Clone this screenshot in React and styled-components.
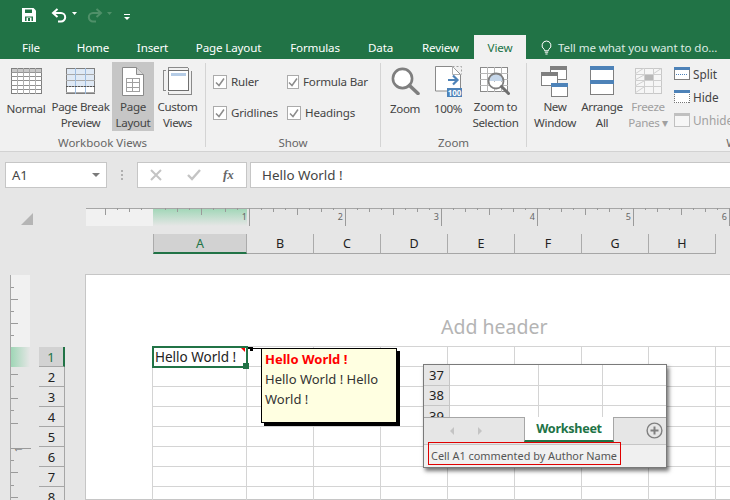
import React from "react";
import styled, { createGlobalStyle } from "styled-components";

const GREEN = "#217346";
const Global = createGlobalStyle`
  html, body { margin: 0; padding: 0; background: #e6e6e6; }
  * { box-sizing: border-box; }
  #root { width: 730px; height: 500px; overflow: hidden; }
`;
const Shell = styled.div`
  width: 730px; height: 500px; overflow: hidden; background: #e6e6e6;
  font-family: "Noto Sans", "Open Sans", sans-serif; color: #444; font-size: 12px;
  display: flex; flex-direction: column;
`;
const TitleBar = styled.header`
  flex: none; height: 59px; background: ${GREEN}; display: flex; flex-direction: column;
`;
const Qat = styled.div`height: 35px; display: flex; align-items: flex-start; padding: 6px 0 0 21px;`;
const QatSlot = styled.span`display: block; margin-right: ${p => p.$gap || 0}px; margin-top: ${p => p.$top || 0}px; line-height: 0;`;
const TabRow = styled.nav`height: 24px; display: flex;`;
const Tab = styled.div`
  flex: none; width: ${p => p.$w}px; display: flex; align-items: center; justify-content: center;
  font-size: 11.6px; letter-spacing: -0.15px; color: ${p => (p.$active ? GREEN : "#fff")};
  background: ${p => (p.$active ? "#f1f1f1" : "transparent")};
`;
const TellMe = styled.div`
  display: flex; align-items: center; gap: 6px; padding-left: 15px; color: #dcebe2; font-size: 11.6px; letter-spacing: -0.1px; white-space: nowrap;
`;
const Ribbon = styled.section`
  flex: none; height: 93px; background: #f1f1f1; border-bottom: 1px solid #d2d2d2; display: flex; padding-top: 4px;
`;
const Group = styled.div`
  flex: none; width: ${p => p.$w}px; height: 84px; display: flex; flex-direction: column;
  border-right: ${p => (p.$last ? "none" : "1px solid #d4d4d4")};
`;
const GroupBody = styled.div`
  flex: 1; display: flex; padding-left: ${p => p.$pad || 0}px; min-height: 0; align-items: flex-start;
`;
const GroupLabel = styled.div`
  flex: none; height: 14px; line-height: 20px; text-align: center; color: #666; font-size: 11.5px; white-space: nowrap;
`;
const BigButton = styled.div`
  flex: none; width: ${p => p.$w}px; height: 69px; margin-left: ${p => p.$ml || 0}px; margin-top: -1px;
  display: flex; flex-direction: column; align-items: center;
  background: ${p => (p.$on ? "#c6c6c6" : "transparent")};
  color: ${p => (p.$dim ? "#a0a0a0" : "#444")};
`;
const BigIcon = styled.div`height: 39px; display: flex; align-items: flex-start; padding-top: ${p => p.$t ?? 6}px; line-height: 0;`;
const BigLabel = styled.div`
  font-size: 11.6px; letter-spacing: -0.35px; line-height: 16px; text-align: center; white-space: pre;
`;
const ShowGrid = styled.div`
  display: grid; grid-template-columns: 74px 74px; grid-auto-rows: 31px; padding-top: 3px;
`;
const CheckRow = styled.label`display: flex; align-items: center; gap: 4px; font-size: 11.6px; letter-spacing: -0.2px; white-space: nowrap; color: #444;`;
const CheckBox = styled.span`
  width: 14px; height: 14px; background: #fff; border: 1px solid #ababab; display: flex; line-height: 0;
  align-items: center; justify-content: center;
`;
const SmallStack = styled.div`margin-left: 4px; margin-top: -1px; display: flex; flex-direction: column;`;
const SmallRow = styled.div`
  height: 23px; display: flex; align-items: center; gap: 3px; font-size: 11.8px; white-space: nowrap;
  color: ${p => (p.$dim ? "#a0a0a0" : "#444")};
`;
const FormulaBar = styled.div`
  flex: none; height: 26px; margin-top: 10px; display: flex; padding-left: 5px;
`;
const NameBox = styled.div`
  flex: none; width: 102px; background: #fff; border: 1px solid #c6c6c6; display: flex; align-items: center; justify-content: space-between;
  padding: 0 6px 0 6px; font-size: 13px; color: #444;
`;
const Caret = styled.span`width: 0; height: 0; border-left: 4px solid transparent; border-right: 4px solid transparent; border-top: 4px solid #7a7a7a;`;
const Grip = styled.div`flex: none; width: 30px; display: flex; flex-direction: column; align-items: center; justify-content: center; gap: 2px;`;
const GripDot = styled.span`width: 2px; height: 2px; background: #b0b0b0;`;
const FnBox = styled.div`
  flex: none; width: 110px; background: #fff; border: 1px solid #c6c6c6; display: flex; align-items: center; padding-left: 12px; line-height: 0;
`;
const FnText = styled.span`
  margin-left: 22px; font-family: "Liberation Serif", serif; font-style: italic; font-weight: bold; font-size: 13px; line-height: 14px; color: #666;
`;
const FnIcon = styled.span`margin-right: ${p => p.$gap}px; line-height: 0;`;
const FormulaInput = styled.div`
  flex: 1; margin-left: 3px; background: #fff; border: 1px solid #c6c6c6; border-right: none; padding-left: 11px; display: flex; align-items: center; font-size: 13.4px; color: #444;
`;
const RulerRow = styled.div`flex: none; height: 18px; margin-top: 20px; display: flex;`;
const Corner = styled.div`
  flex: none; width: 86px; padding: 5px 0 0 21px;
  &::before { content: ""; display: block; width: 12px; height: 12px; background: #b5b5b5; clip-path: polygon(100% 0, 100% 100%, 0 100%); }
`;
const HRuler = styled.div`flex: 1; position: relative; display: flex;`;
const Band = styled.div`
  flex: ${p => (p.$w ? `none` : 1)}; width: ${p => p.$w}px;
  background: ${p => p.$bg};
`;
const RulerMarks = styled.svg`position: absolute; left: 0; top: 0;`;
const ColRow = styled.div`flex: none; height: 20px; margin-top: 8px; display: grid; grid-template-columns: 153px 94px 67px 67px 67px 67px 67px 67px 67px 1fr;`;
const ColCell = styled.div`
  display: flex; align-items: center; justify-content: center; font-size: 12.5px; color: ${p => (p.$on ? GREEN : "#222")};
  background: ${p => (p.$on ? "#d2d2d2" : "transparent")};
  border-bottom: ${p => (p.$on ? `2px solid ${GREEN}` : "1px solid #a6a6a6")};
  border-right: 1px solid #ababab;
  border-left: ${p => (p.$on ? "1px solid #ababab" : "none")};
`;
const ColSpacer = styled.div``;
const SheetRow = styled.div`flex: 1; min-height: 0; margin-top: 20px; display: flex; padding-left: 10px;`;
const VRuler = styled.div`
  flex: none; width: 20px; margin-top: 1px; position: relative; display: flex; flex-direction: column; border-left: 1px solid #a6a6a6;
`;
const VBand = styled.div`
  flex: ${p => (p.$h ? "none" : 1)}; height: ${p => p.$h}px; background: ${p => p.$bg};
`;
const RowHeads = styled.div`flex: none; width: 26px; margin-left: 9px; padding-top: 73px;`;
const RowHead = styled.div`
  height: 20px; display: flex; align-items: center; justify-content: center; font-size: 13px;
  color: ${p => (p.$on ? GREEN : "#222")};
  background: ${p => (p.$on ? "#d2d2d2" : "transparent")};
  border-bottom: 1px solid #a6a6a6;
  border-right: ${p => (p.$on ? `2px solid ${GREEN}` : "1px solid #a6a6a6")};
`;
const Page = styled.main`
  flex: none; width: 646px; margin-left: 20px; background: #fff; border: 1px solid #c6c6c6; border-right: none; position: relative;
`;
const HeaderZone = styled.div`
  height: 72px; padding: 39px 0 0 355px; color: #b4b4b4; font-size: 19.5px; line-height: 26px; white-space: nowrap;
`;
const Grid = styled.div`
  display: grid; grid-template-columns: 94px 67px 67px 67px 67px 67px 67px 67px 1fr; grid-auto-rows: 20px; margin-left: 66px;
  border-top: 1px solid #d4d4d4; border-left: 1px solid #d4d4d4; margin-top: -1px;
`;
const GridCell = styled.div`
  border-bottom: 1px solid #d4d4d4;
  border-right: 1px solid #d4d4d4;
`;
const Selected = styled.div`
  position: absolute; left: 66px; top: 71px; width: 96px; height: 22px; border: 2px solid ${GREEN};
  display: flex; align-items: center; padding-left: 1px; font-size: 13.5px; color: #222; white-space: nowrap;
`;
const Handle = styled.span`
  position: absolute; right: -3px; bottom: -3px; width: 6px; height: 6px; background: ${GREEN};
`;
const RedMark = styled.span`
  position: absolute; right: 1px; top: 0; width: 4px; height: 4px; background: #f00; clip-path: polygon(0 0, 100% 0, 100% 100%);
`;
const Leader = styled.svg`position: absolute; left: 161px; top: 71px;`;
const Comment = styled.aside`
  position: absolute; left: 175px; top: 73px; width: 136px; height: 75px; background: #ffffe1; border: 1px solid #000;
  box-shadow: 3px 3px 0 #000; padding: 0 3px; font-size: 13px; line-height: 20px; color: #333;
`;
const CommentTitle = styled.div`font-weight: 700; color: #f00;`;
const Popup = styled.aside`
  position: absolute; left: 337px; top: 89px; width: 244px; height: 104px; background: #fff; border: 1px solid #7a7a7a;
  box-shadow: 2px 3px 4px rgba(0,0,0,.55); display: flex; flex-direction: column;
`;
const PopSheet = styled.div`flex: none; height: 52px; overflow: hidden; display: grid; grid-template-columns: 26px 89px 64px 1fr; grid-auto-rows: 20.5px;`;
const PopHead = styled.div`
  background: #e6e6e6; border-bottom: 1px solid #c6c6c6; border-right: 1px solid #c6c6c6; display: flex; align-items: center; justify-content: center; font-size: 13px; color: #222;
`;
const PopCell = styled.div`border-bottom: 1px solid #d4d4d4; border-right: ${p => (p.$end ? "none" : "1px solid #d4d4d4")};`;
const TabStrip = styled.div`
  flex: none; height: 28px; background: #e6e6e6; border-top: 1px solid #a6a6a6; border-bottom: 1px solid #c6c6c6; display: flex; align-items: flex-start;
`;
const Arrows = styled.div`flex: none; width: 100px; height: 25px; display: flex; align-items: center; padding-left: 26px; gap: 24px;`;
const Arrow = styled.span`
  width: 0; height: 0; border-top: 4px solid transparent; border-bottom: 4px solid transparent;
  ${p => p.$dir === "l" ? "border-right: 4px solid #c4c4c4;" : "border-left: 4px solid #c4c4c4;"}
`;
const SheetTab = styled.div`
  flex: none; width: 90px; height: 25px; margin-top: -1px; background: #fff; border-left: 1px solid #a6a6a6; border-right: 1px solid #a6a6a6;
  border-bottom: 2px solid ${GREEN}; color: ${GREEN}; font-weight: 700; font-size: 12.6px; letter-spacing: -0.3px; display: flex; align-items: center; justify-content: center;
`;
const AddSheet = styled.div`flex: 1; height: 25px; display: flex; align-items: center; justify-content: flex-end; padding-right: 3px; line-height: 0;`;
const Status = styled.div`
  flex: 1; background: #f0f0f0; position: relative; padding: 0 0 2px 7px; display: flex; align-items: center; font-size: 10.9px; color: #555; white-space: nowrap;
`;
const Annotation = styled.div`
  position: absolute; left: 4px; top: -3px; width: 193px; height: 23px; border: 1.5px solid #e00000;
`;

const S = { crispEdges: { shapeRendering: "crispEdges" } };

const Save = () => (
  <svg width="16" height="16" viewBox="0 0 16 16"><path d="M1 1h11.5L15 3.5V15H1z" fill="#fff" /><path d="M4 2.5h7v3.5H4z" fill={GREEN} /><path d="M4 9.5h8V14H4z" fill={GREEN} /><path d="M5.5 10.5h5V14h-5z" fill="#fff" /><path d="M7 11h2v3H7z" fill={GREEN}/></svg>
);
const Undo = ({ c = "#fff", flip }) => (
  <svg width="17" height="15" viewBox="0 0 17 15" style={flip ? { transform: "scaleX(-1)" } : undefined}>
    <path d="M3 5h7a4.2 4.2 0 0 1 0 8.4H7" fill="none" stroke={c} strokeWidth="2" /><path d="M6.5 1L2 5l4.5 4" fill="none" stroke={c} strokeWidth="2" />
  </svg>
);
const Drop = ({ c = "#fff" }) => <svg width="7" height="5" viewBox="0 0 7 5"><path d="M1 1h5L3.5 4z" fill={c} /></svg>;
const Customize = () => (
  <svg width="8" height="8" viewBox="0 0 8 8"><path d="M1 1h6v1H1z" fill="#fff" /><path d="M1 4h6L4 7z" fill="#fff" /></svg>
);
const Bulb = () => (
  <svg width="11" height="15" viewBox="0 0 11 15"><path d="M5.5 1a4.5 4.5 0 0 0-2.5 8.2c.5.4.7 1 .7 1.6h3.6c0-.6.2-1.2.7-1.6A4.5 4.5 0 0 0 5.5 1z" fill="none" stroke="#fff" /><path d="M3.8 12.2h3.4M4.4 14h2.2" stroke="#fff" /></svg>
);
const NormalIcon = () => (
  <svg width="31" height="26" viewBox="0 0 31 26" {...S.crispEdges}>
    <rect x="0.5" y="0.5" width="30" height="25" fill="#fff" stroke="#7f7f7f" />
    {[4, 8, 12, 17, 21].map(y => <path key={y} d={`M0 ${y + 0.5}h31`} stroke="#8f8f8f" />)}
    {[6, 12, 18, 24].map(x => <path key={x} d={`M${x + 0.5} 0v26`} stroke="#b0b0b0" />)}
    <rect x="0.5" y="0.5" width="30" height="4" fill="#9a9a9a" opacity=".55" />
  </svg>
);
const BreakIcon = () => (
  <svg width="29" height="26" viewBox="0 0 29 26" {...S.crispEdges}>
    <rect x="0.5" y="0.5" width="28" height="25" fill="#dfe9f5" stroke="#7f7f7f" />
    <rect x="1" y="18" width="27" height="7" fill="#fff" />
    {[6, 12, 18, 24].map(y => <path key={y} d={`M0 ${y + 0.5}h29`} stroke="#a8a8a8" />)}
    {[9, 19].map(x => <path key={x} d={`M${x + 0.5} 0v26`} stroke="#9dbce0" />)}
    <path d="M0 18.5h29" stroke="#555" strokeDasharray="2 1" />
  </svg>
);
const LayoutIcon = () => (
  <svg width="22" height="29" viewBox="0 0 22 29">
    <path d="M0.5 0.5h14l7 7v21H0.5z" fill="#fff" stroke="#8a8a8a" /><path d="M14.5 0.5v7h7" fill="#d8d8d8" stroke="#8a8a8a" />
    <g {...S.crispEdges}><rect x="4.5" y="11.5" width="13" height="13" fill="#fff" stroke="#a0a0a0" /><path d="M4 15.5h14M4 20.5h14M10.5 11v14" stroke="#a0a0a0" /></g>
  </svg>
);
const CustomIcon = () => (
  <svg width="29" height="28" viewBox="0 0 29 28" {...S.crispEdges}>
    <path d="M0.5 3.5v20M0 3.5h3M0 23.5h3M5 0.5h20M5 0.5v2M25 0.5v2" stroke="#8a8a8a" fill="none" />
    <path d="M28.5 3.5v23.5H5V25" fill="none" stroke="#8a8a8a" />
    <rect x="5.5" y="3.5" width="20" height="20" fill="#fff" stroke="#6f6f6f" /><rect x="8" y="6" width="15" height="3" fill="#b5cce6" />
  </svg>
);
const Check = () => <svg width="10" height="10" viewBox="0 0 10 10"><path d="M1 5.5l3 3L9 1.5" fill="none" stroke="#8c8c8c" strokeWidth="1.5" /></svg>;
const Mag = () => (
  <svg width="29" height="28" viewBox="0 0 29 28"><circle cx="11.5" cy="11.5" r="9.6" fill="#fff" stroke="#7f7f7f" strokeWidth="2.6" /><path d="M18.5 18.5l8.5 8" stroke="#7f7f7f" strokeWidth="3.6" strokeLinecap="round" /></svg>
);
const HundredIcon = () => (
  <svg width="27" height="31" viewBox="0 0 27 31">
    <path d="M0.5 0.5h17l8 8V25H0.5z" fill="#fff" stroke="#8a8a8a" />
    <path d="M17.5 0.5h9v8" fill="#f1f1f1" stroke="#a0a0a0" strokeDasharray="2 2" />
    <path d="M17.5 0.5v8h8" fill="none" stroke="#b0b0b0" />
    <path d="M13 14h9M18 9.5l4.5 4.5-4.5 4.5" fill="none" stroke="#4d82b8" strokeWidth="2.2" />
    <rect x="12" y="22" width="15" height="9" fill="#4d82b8" />
    <text x="19.5" y="29.6" textAnchor="middle" fontSize="8" fontWeight="700" fill="#fff" fontFamily="Noto Sans">100</text>
  </svg>
);
const ZoomSelIcon = () => (
  <svg width="31" height="29" viewBox="0 0 31 29">
    <g {...S.crispEdges}>
      <rect x="0.5" y="0.5" width="27" height="24" fill="#fff" stroke="#8a8a8a" />
      <path d="M0 6.5h28M0 12.5h28M0 18.5h28M7.5 0v25M14.5 0v25M21.5 0v25" stroke="#b8b8b8" />
    </g>
    <path d="M9 14h14v-1a7 7 0 0 0-14 0z" fill="#c6d7ea" /><path d="M9 15h14a7 7 0 0 1-14 0z" fill="#fff" />
    <circle cx="16" cy="14" r="7.5" fill="none" stroke="#7f7f7f" strokeWidth="1.8" />
    <path d="M21.5 19.5l7 7" stroke="#6f6f6f" strokeWidth="3" strokeLinecap="round" />
  </svg>
);
const Win = ({ x, y, w, h, c }) => (
  <g {...S.crispEdges}><rect x={x + 0.5} y={y + 0.5} width={w - 1} height={h - 1} fill="#fff" stroke="#7f7f7f" /><rect x={x} y={y} width={w} height="4" fill={c} /></g>
);
const NewWinIcon = () => (
  <svg width="28" height="32" viewBox="0 0 28 32"><Win x={9} y={0} w={17} h={14} c="#7f7f7f" /><Win x={0} y={6} w={17} h={14} c="#7f7f7f" /><Win x={10} y={17} w={17} h={14} c="#4d82b8" /></svg>
);
const ArrangeIcon = () => (
  <svg width="24" height="29" viewBox="0 0 24 29"><Win x={0} y={0} w={24} h={15} c="#4d82b8" /><Win x={0} y={14} w={24} h={15} c="#4d82b8" /></svg>
);
const FreezeIcon = () => (
  <svg width="27" height="26" viewBox="0 0 27 26" {...S.crispEdges}>
    <rect x="0.5" y="0.5" width="26" height="25" fill="#f6f6f6" stroke="#c8c8c8" />
    <path d="M0 6.5h27M0 12.5h27M0 18.5h27M9.5 0v26M18.5 0v26" stroke="#cfcfcf" />
    <rect x="10" y="7" width="8" height="5" fill="#b8b8b8" />
    <path d="M0 6l9-6M18 6l9-6M0 12l9-5M0 18l9-5M0 25l9-6" stroke="#cfcfcf" shapeRendering="auto" />
  </svg>
);
const SplitIcon = () => (
  <svg width="16" height="13" viewBox="0 0 16 13" {...S.crispEdges}><rect x="0.5" y="0.5" width="15" height="12" fill="#fff" stroke="#7f7f7f" /><rect width="16" height="3" fill="#4d82b8" /><path d="M2 7.5h12" stroke="#4d82b8" strokeDasharray="1 1" /></svg>
);
const HideIcon = () => (
  <svg width="16" height="13" viewBox="0 0 16 13" {...S.crispEdges}><rect x="0.5" y="0.5" width="15" height="12" fill="#fff" stroke="#777" strokeDasharray="1 1" /><rect width="16" height="3" fill="#4d82b8" /></svg>
);
const UnhideIcon = () => (
  <svg width="16" height="14" viewBox="0 0 16 14" {...S.crispEdges}><rect x="0.5" y="0.5" width="15" height="13" fill="#f6f6f6" stroke="#c0c0c0" /><rect width="16" height="3" fill="#c0c0c0" /></svg>
);
const Cross = () => <svg width="12" height="12" viewBox="0 0 12 12"><path d="M1 1l10 10M11 1L1 11" stroke="#c4c4c4" strokeWidth="2" /></svg>;
const Tick = () => <svg width="14" height="12" viewBox="0 0 14 12"><path d="M1 6l4 4 8-9" fill="none" stroke="#c4c4c4" strokeWidth="2.4" /></svg>;
const Plus = () => (
  <svg width="17" height="17" viewBox="0 0 17 17"><circle cx="8.5" cy="8.5" r="7.4" fill="none" stroke="#808080" strokeWidth="1.4" /><path d="M8.5 4.5v8M4.5 8.5h8" stroke="#808080" strokeWidth="2" /></svg>
);

const HRulerMarks = () => {
  const marks = [];
  for (let x = 165 - 86; x < 644; x += 12) {
    const abs = x + 86;
    const off = abs - 153;
    let h = 1.5;
    if (off % 96 === 0) h = 18; else if (off % 48 === 0) h = 7; else if (off % 24 === 0) h = 4;
    marks.push(<path key={x} d={`M${x + 0.5} 0v${h}`} stroke="#9a9a9a" />);
  }
  for (let x = 105 - 86; x < 67; x += 12) {
    const off = x + 86 - 57;
    const h = off % 96 === 0 ? 18 : off % 48 === 0 ? 7 : off % 24 === 0 ? 4 : 1.5;
    marks.push(<path key={"l" + x} d={`M${x + 0.5} 0v${h}`} stroke="#9a9a9a" />);
  }
  return (
    <RulerMarks width="644" height="18">
      <path d="M0 0.5h644" stroke="#a6a6a6" {...S.crispEdges} />
      <g {...S.crispEdges}>{marks}</g>
      {[1, 2, 3, 4, 5, 6].map(n => (
        <text key={n} x={153 + 96 * n - 86 - 2} y="12" textAnchor="end" fontSize="9" fill="#666" fontFamily="Noto Sans">{n}</text>
      ))}
    </RulerMarks>
  );
};
const VRulerMarks = () => {
  const longs = [24, 48, 99, 123, 148, 197, 222];
  const shorts = [12, 36, 60, 111, 135, 185, 210];
  return (
    <RulerMarks width="20" height="225">
      <g {...S.crispEdges}>
        {longs.map(y => <path key={y} d={`M0 ${y + 0.5}h7`} stroke="#9a9a9a" />)}
        {shorts.map(y => <path key={y} d={`M0 ${y + 0.5}h3`} stroke="#9a9a9a" />)}
        <path d="M0 173.5h20" stroke="#9a9a9a" />
      </g>
      <text x="5" y="180" fontSize="8" fill="#666" fontFamily="Noto Sans" transform="rotate(-90 5 177) translate(0 3)">1</text>
    </RulerMarks>
  );
};

const tabs = [["File", 62], ["Home", 62], ["Insert", 57], ["Page Layout", 95], ["Formulas", 78], ["Data", 53], ["Review", 67]];
const colW = ["A", "B", "C", "D", "E", "F", "G", "H"];

function Big({ w, ml, on, dim, icon, label, t }) {
  return (
    <BigButton $w={w} $ml={ml} $on={on} $dim={dim}>
      <BigIcon $t={t}>{icon}</BigIcon>
      <BigLabel>{label}</BigLabel>
    </BigButton>
  );
}
function Checked({ children }) {
  return <CheckRow><CheckBox><Check /></CheckBox>{children}</CheckRow>;
}

export default function App() {
  return (
    <Shell>
      <Global />
      <TitleBar>
        <Qat>
          <QatSlot $gap={14} $top={1}><Save /></QatSlot>
          <QatSlot $gap={3} $top={2}><Undo /></QatSlot>
          <QatSlot $gap={8} $top={5}><Drop /></QatSlot>
          <QatSlot $gap={3} $top={2}><Undo c="#4f9069" flip /></QatSlot>
          <QatSlot $gap={10} $top={5}><Drop c="#4f9069" /></QatSlot>
          <QatSlot $top={7}><Customize /></QatSlot>
        </Qat>
        <TabRow>
          {tabs.map(([t, w]) => <Tab key={t} $w={w}>{t}</Tab>)}
          <Tab $w={52} $active>View</Tab>
          <TellMe><Bulb />Tell me what you want to do...</TellMe>
        </TabRow>
      </TitleBar>
      <Ribbon>
        <Group $w={206}>
          <GroupBody>
            <Big w={52} icon={<NormalIcon />} label="Normal" />
            <Big w={57} icon={<BreakIcon />} label={"Page Break\nPreview"} />
            <Big w={42} ml={3} t={5} on icon={<LayoutIcon />} label={"Page\nLayout"} />
            <Big w={47} t={5} icon={<CustomIcon />} label={"Custom\nViews"} />
          </GroupBody>
          <GroupLabel>Workbook Views</GroupLabel>
        </Group>
        <Group $w={175}>
          <GroupBody $pad={7}>
            <ShowGrid>
              <Checked>Ruler</Checked>
              <Checked>Formula Bar</Checked>
              <Checked>Gridlines</Checked>
              <Checked>Headings</Checked>
            </ShowGrid>
          </GroupBody>
          <GroupLabel>Show</GroupLabel>
        </Group>
        <Group $w={146}>
          <GroupBody>
            <Big w={48} t={5} icon={<Mag />} label="Zoom" />
            <Big w={38} t={4} icon={<HundredIcon />} label="100%" />
            <Big w={57} t={5} icon={<ZoomSelIcon />} label={"Zoom to\nSelection"} />
          </GroupBody>
          <GroupLabel>Zoom</GroupLabel>
        </Group>
        <Group $w={442} $last>
          <GroupBody $pad={5}>
            <Big w={46} t={4} icon={<NewWinIcon />} label={"New\nWindow"} />
            <Big w={48} t={4} icon={<ArrangeIcon />} label={"Arrange\nAll"} />
            <Big w={44} dim icon={<FreezeIcon />} label={"Freeze\nPanes ▾"} />
            <SmallStack>
              <SmallRow><SplitIcon />Split</SmallRow>
              <SmallRow><HideIcon />Hide</SmallRow>
              <SmallRow $dim><UnhideIcon />Unhide</SmallRow>
            </SmallStack>
          </GroupBody>
          <GroupLabel>Window</GroupLabel>
        </Group>
      </Ribbon>
      <FormulaBar>
        <NameBox>A1<Caret /></NameBox>
        <Grip><GripDot /><GripDot /><GripDot /></Grip>
        <FnBox>
          <FnIcon $gap={25}><Cross /></FnIcon>
          <FnIcon $gap={0}><Tick /></FnIcon>
          <FnText>fx</FnText>
        </FnBox>
        <FormulaInput>Hello World !</FormulaInput>
      </FormulaBar>
      <RulerRow>
        <Corner />
        <HRuler>
          <Band $w={67} $bg="#f1f1f1" />
          <Band $w={94} $bg="linear-gradient(to bottom, #9fd6b6, #e6e6e6)" />
          <Band $bg="#e6e6e6" />
          <HRulerMarks />
        </HRuler>
      </RulerRow>
      <ColRow>
        <ColSpacer />
        {colW.map((c, i) => <ColCell key={c} $on={i === 0}>{c}</ColCell>)}
      </ColRow>
      <SheetRow>
        <VRuler>
          <VBand $h={72} $bg="#f1f1f1" />
          <VBand $h={20} $bg="linear-gradient(to right, #9fd6b6, #e6e6e6)" />
          <VBand $bg="#e6e6e6" />
          <VRulerMarks />
        </VRuler>
        <RowHeads>
          {[1, 2, 3, 4, 5, 6, 7, 8].map(n => <RowHead key={n} $on={n === 1}>{n}</RowHead>)}
        </RowHeads>
        <Page>
          <HeaderZone>Add header</HeaderZone>
          <Grid>
            {Array.from({ length: 72 }, (_, i) => <GridCell key={i} />)}
          </Grid>
          <Selected>
            Hello World !
            <RedMark />
            <Handle />
          </Selected>
          <Leader width="18" height="6" viewBox="0 0 18 6">
            <path d="M1 1h5v4H3V3H1z" fill="#000" /><path d="M4 2.5h14" stroke="#000" />
          </Leader>
          <Comment>
            <CommentTitle>Hello World !</CommentTitle>
            Hello World ! Hello World !
          </Comment>
          <Popup>
            <PopSheet>
              {[37, 38, 39].map(n => (
                <React.Fragment key={n}>
                  <PopHead>{n}</PopHead>
                  <PopCell /><PopCell /><PopCell $end />
                </React.Fragment>
              ))}
            </PopSheet>
            <TabStrip>
              <Arrows><Arrow $dir="l" /><Arrow $dir="r" /></Arrows>
              <SheetTab>Worksheet</SheetTab>
              <AddSheet><Plus /></AddSheet>
            </TabStrip>
            <Status>
              Cell A1 commented by Author Name
              <Annotation />
            </Status>
          </Popup>
        </Page>
      </SheetRow>
    </Shell>
  );
}
